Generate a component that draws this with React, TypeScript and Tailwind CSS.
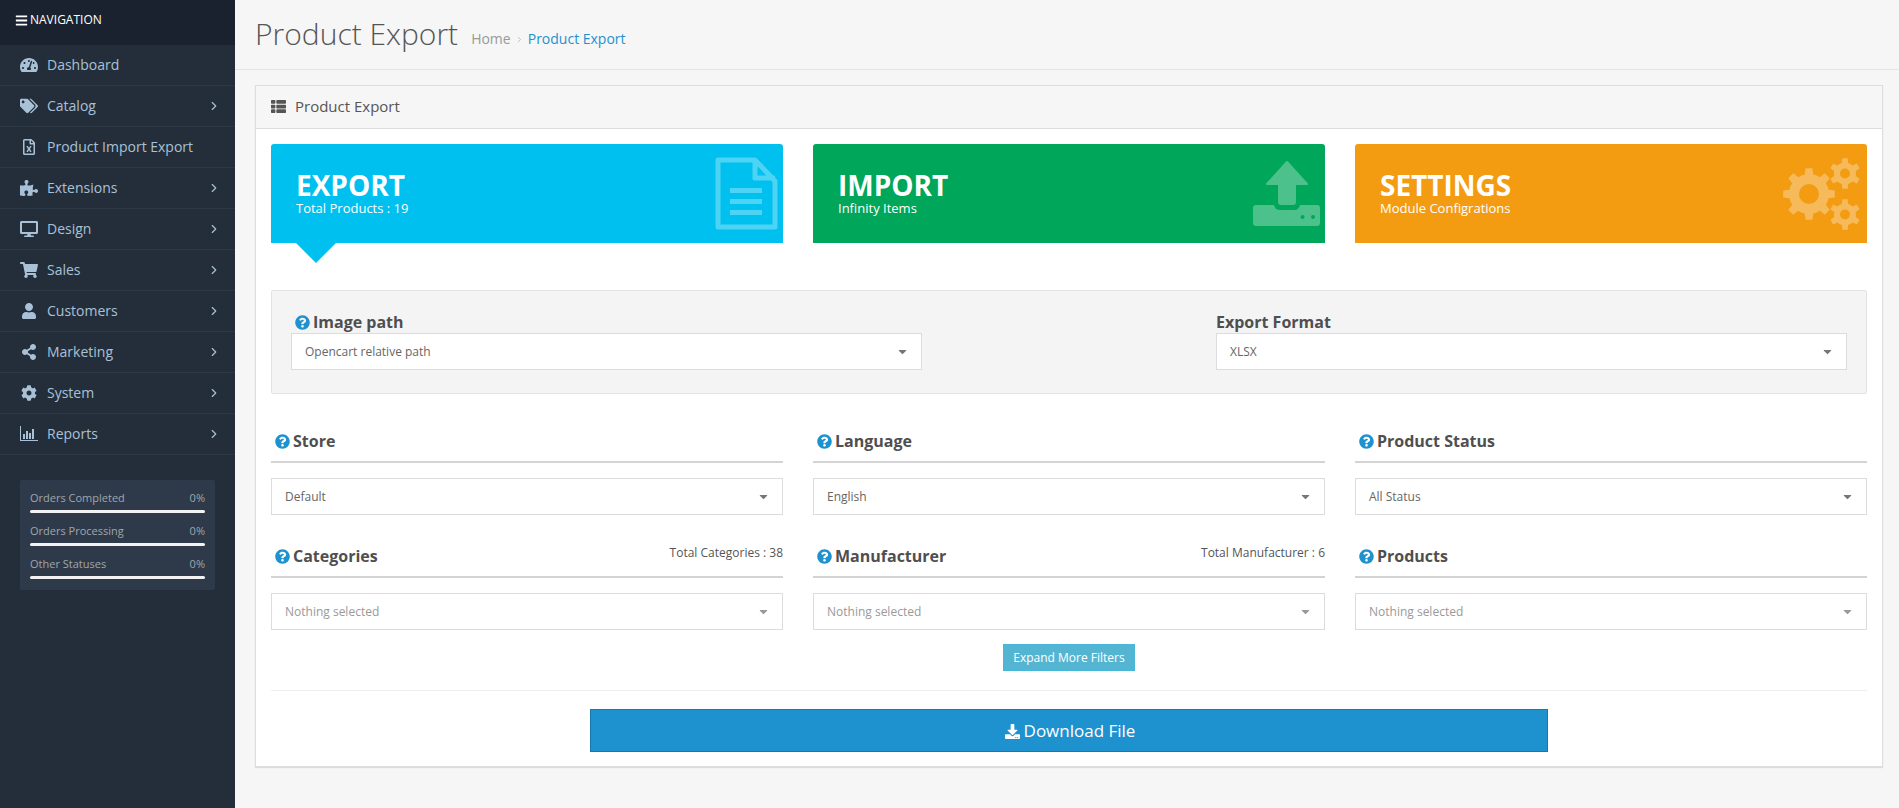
import {
  FaBars,
  FaCaretDown,
  FaCog,
  FaDesktop,
  FaDownload,
  FaPuzzlePiece,
  FaQuestionCircle,
  FaRegFileExcel,
  FaShareAlt,
  FaShoppingCart,
  FaTachometerAlt,
  FaTags,
  FaThList,
  FaUser,
} from "react-icons/fa";
import { ChevronRight } from "lucide-react";

const BarChartIcon = ({ className }: { className?: string }) => (
  <svg width="18" height="16" viewBox="0 0 18 16" fill="currentColor" className={className}>
    <path d="M0 0H1V14H18V15H0Z" />
    <rect x="3" y="8" width="2" height="5" />
    <rect x="6" y="5" width="2" height="8" />
    <rect x="9" y="7" width="2" height="6" />
    <rect x="12" y="3" width="2" height="10" />
  </svg>
);

const menu = [
  { label: "Dashboard", icon: FaTachometerAlt, more: false },
  { label: "Catalog", icon: FaTags, more: true },
  { label: "Product Import Export", icon: FaRegFileExcel, more: false },
  { label: "Extensions", icon: FaPuzzlePiece, more: true },
  { label: "Design", icon: FaDesktop, more: true },
  { label: "Sales", icon: FaShoppingCart, more: true },
  { label: "Customers", icon: FaUser, more: true },
  { label: "Marketing", icon: FaShareAlt, more: true },
  { label: "System", icon: FaCog, more: true },
  { label: "Reports", icon: BarChartIcon, more: true },
];

const stats = ["Orders Completed", "Orders Processing", "Other Statuses"];

const gearPath = (cx: number, cy: number, outer: number, inner: number, hole: number, teeth: number) => {
  const step = (Math.PI * 2) / teeth;
  let d = "";
  for (let i = 0; i < teeth; i++) {
    const a = i * step - Math.PI / 2;
    const pts: [number, number][] = [
      [inner, a - step * 0.5],
      [inner, a - step * 0.27],
      [outer, a - step * 0.17],
      [outer, a + step * 0.17],
      [inner, a + step * 0.27],
    ];
    pts.forEach(([r, t], j) => {
      d += `${i === 0 && j === 0 ? "M" : "L"}${(cx + r * Math.cos(t)).toFixed(2)} ${(cy + r * Math.sin(t)).toFixed(2)}`;
    });
  }
  d += `Z M${cx - hole} ${cy}a${hole} ${hole} 0 1 0 ${hole * 2} 0a${hole} ${hole} 0 1 0 ${-hole * 2} 0Z`;
  return d;
};

const FileIcon = () => (
  <svg width="63" height="73" viewBox="0 0 63 73" className="text-white opacity-30">
    <path
      d="M3 3H40L60 24V70H3Z M40 3V21H60"
      fill="none"
      stroke="currentColor"
      strokeWidth="5"
      strokeLinejoin="round"
    />
    <rect x="15" y="31" width="32" height="5" fill="currentColor" />
    <rect x="15" y="42" width="32" height="5" fill="currentColor" />
    <rect x="15" y="53" width="32" height="5" fill="currentColor" />
  </svg>
);

const UploadIcon = () => (
  <svg width="67" height="66" viewBox="0 0 67 66" className="text-white opacity-30">
    <path
      d="M34 1L54 23H42V41Q42 43 40 43H28Q26 43 26 41V23H14Z"
      fill="currentColor"
      stroke="currentColor"
      strokeWidth="2"
      strokeLinejoin="round"
    />
    <path
      fillRule="evenodd"
      fill="currentColor"
      d="M3 44H21Q22 49 27 49H41Q46 49 47 44H64Q67 44 67 47V62Q67 65 64 65H3Q0 65 0 62V47Q0 44 3 44Z M47.500 56a2 2 0 1 0 4 0a2 2 0 1 0 -4 0Z M58 56a2 2 0 1 0 4 0a2 2 0 1 0 -4 0Z"
    />
  </svg>
);

const GearsIcon = () => (
  <svg width="80" height="72" viewBox="0 0 80 72" className="text-white opacity-30">
    <path fill="currentColor" fillRule="evenodd" d={gearPath(27, 36, 26, 20, 10, 8)} />
    <path fill="currentColor" fillRule="evenodd" d={gearPath(63, 15.500, 15.500, 11, 5, 6)} />
    <path fill="currentColor" fillRule="evenodd" d={gearPath(63, 56.500, 15.500, 11, 5, 6)} />
  </svg>
);

const cards = [
  { title: "EXPORT", sub: "Total Products : 19", bg: "bg-[#00c0ef]", icon: <FileIcon />, active: true },
  { title: "IMPORT", sub: "Infinity Items", bg: "bg-[#00a65a]", icon: <UploadIcon />, active: false },
  { title: "SETTINGS", sub: "Module Configrations", bg: "bg-[#f39c12]", icon: <GearsIcon />, active: false },
];

const SelectBox = ({ value, muted }: { value: string; muted?: boolean }) => (
  <div className="flex h-[37px] items-center justify-between border border-[#dcdcdc] bg-white pl-[13px] pr-[12px]">
    <span className={muted ? "text-[#999999]" : "text-[#666666]"}>{value}</span>
    <FaCaretDown className={muted ? "text-[13px] text-[#999999]" : "text-[13px] text-[#777777]"} />
  </div>
);

const Help = () => <FaQuestionCircle className="shrink-0 text-[15px] text-[#1e91cf]" />;

const Field = ({ label, value, muted, total }: { label: string; value: string; muted?: boolean; total?: string }) => (
  <div>
    <div className="flex h-[35px] justify-between border-b-2 border-[#d4d4d4] pl-1">
      <div className="flex h-[26px] items-center gap-[3px] text-base font-bold text-[#4f4f4f]">
        <Help />
        {label}
      </div>
      {total && <span className="leading-5 text-[#555555]">{total}</span>}
    </div>
    <div className="mt-[15px]">
      <SelectBox value={value} muted={muted} />
    </div>
  </div>
);

const App = () => {
  return (
    <div className="flex min-h-screen bg-[#f6f6f6] font-['Open_Sans',sans-serif] text-xs text-[#666666]">
      <aside className="w-[235px] shrink-0 bg-[#242e3b]">
        <div className="flex h-[45px] items-center gap-[2px] bg-[#1a2230] pb-[5px] pl-[15px] text-white">
          <FaBars className="text-[13px]" />
          NAVIGATION
        </div>
        {menu.map((item) => (
          <div
            key={item.label}
            className="flex h-[41px] items-center border-b border-[#2c3846] pl-5 pr-[14px] text-sm text-[#a9c1d6]"
          >
            <item.icon className="w-[18px] shrink-0 text-base" />
            <span className="ml-[9px] flex-1">{item.label}</span>
            {item.more && <ChevronRight size={14} strokeWidth={2} />}
          </div>
        ))}
        <div className="mx-5 mt-[25px] rounded-[2px] bg-[#2e3a49] px-[10px] pb-[11px] pt-[10px] text-[11px] text-[#a0a6ad]">
          {stats.map((stat) => (
            <div key={stat} className="mb-[10px] last:mb-0">
              <div className="flex h-[17px] items-center justify-between">
                <span>{stat}</span>
                <span>0%</span>
              </div>
              <div className="mt-[3px] h-[3px] rounded-full bg-[#f2f2f2]" />
            </div>
          ))}
        </div>
      </aside>
      <main className="min-w-0 flex-1">
        <div className="flex h-[70px] items-center gap-[13px] border-b border-[#e4e4e4] pb-[2px] pl-5">
          <h1 className="text-[30px] font-light text-[#555555]">Product Export</h1>
          <div className="mt-[11px] flex items-center gap-1 text-sm">
            <span className="text-[#999999]">Home</span>
            <ChevronRight size={9} className="text-[#aaaaaa]" />
            <span className="text-[#1e91cf]">Product Export</span>
          </div>
        </div>
        <section className="ml-5 mr-4 mt-[15px] border border-[#dddddd] bg-white shadow-[0_1px_1px_rgba(0,0,0,0.1)]">
          <div className="flex h-[43px] items-center gap-[9px] border-b border-[#dddddd] bg-[#f6f6f6] pb-[2px] pl-[15px] text-[15px] text-[#555555]">
            <FaThList className="text-[15px]" />
            Product Export
          </div>
          <div className="px-[15px] pb-[14px] pt-[15px]">
            <div className="grid grid-cols-3 gap-[30px]">
              {cards.map((card) => (
                <div
                  key={card.title}
                  className={`relative flex h-[99px] items-center justify-between rounded-t-[3px] pl-[25px] pr-[5px] text-white ${card.bg}`}
                >
                  <div>
                    <div className="text-[28px] font-bold leading-7">{card.title}</div>
                    <div className="text-[13px] leading-[18px]">{card.sub}</div>
                  </div>
                  {card.icon}
                  {card.active && (
                    <div className="absolute left-[25px] top-full h-0 w-0 border-x-[20px] border-t-[20px] border-x-transparent border-t-[#00c0ef]" />
                  )}
                </div>
              ))}
            </div>
            <div className="mt-[47px] flex justify-between rounded-[2px] border border-[#e3e3e3] bg-[#f4f4f4] px-[19px] pb-[23px] pt-5">
              <div className="w-[631px]">
                <div className="flex h-[22px] items-center gap-[3px] pl-1 text-base font-bold text-[#4f4f4f]">
                  <Help />
                  Image path
                </div>
                <SelectBox value="Opencart relative path" />
              </div>
              <div className="w-[631px]">
                <div className="flex h-[22px] items-center text-base font-bold text-[#4f4f4f]">Export Format</div>
                <SelectBox value="XLSX" />
              </div>
            </div>
            <div className="mt-[34px] grid grid-cols-3 gap-x-[30px] gap-y-7">
              <Field label="Store" value="Default" />
              <Field label="Language" value="English" />
              <Field label="Product Status" value="All Status" />
              <Field label="Categories" value="Nothing selected" muted total="Total Categories : 38" />
              <Field label="Manufacturer" value="Nothing selected" muted total="Total Manufacturer : 6" />
              <Field label="Products" value="Nothing selected" muted />
            </div>
            <div className="mt-[14px] flex justify-center">
              <button className="h-[27px] w-[132px] border border-[#46b8da] bg-[#54b5d3] text-xs text-white">
                Expand More Filters
              </button>
            </div>
            <div className="mt-[19px] border-t border-[#eeeeee] pt-[18px]">
              <button className="mx-auto flex h-[43px] w-[958px] items-center justify-center gap-1 border border-[#1978ab] bg-[#1e91cf] pl-[2px] pt-[1px] text-[17px] text-white">
                <FaDownload className="text-[15px]" />
                Download File
              </button>
            </div>
          </div>
        </section>
      </main>
    </div>
  );
};

export default App;
